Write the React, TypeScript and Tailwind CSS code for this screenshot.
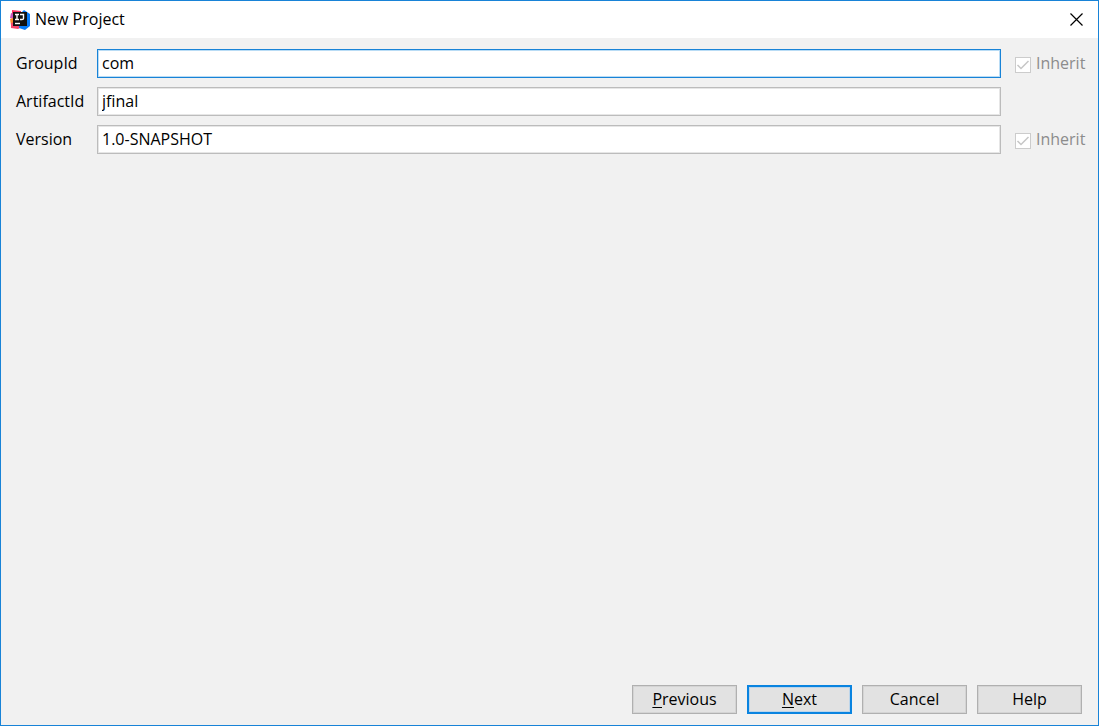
import React, { useState } from 'react';

interface FieldRowProps {
  id: string;
  label: string;
  initialValue: string;
  active?: boolean;
  inherit?: boolean;
}

function IdeaLogo() {
  return (
    <svg className="w-5 h-5 flex-shrink-0" viewBox="0 0 20 20" aria-hidden="true">
      <path d="M2 0 L11 1 L11 5 L2 7 Z" fill="#f8315f" />
      <path d="M1 3 L4 4 L4 9 L0 8 Z" fill="#c757bc" />
      <path d="M0 9 L5 7 L5 14 L1 15 Z" fill="#fc8a2c" />
      <path d="M1 13 L5 12 L12 17 L8 19 L1 18 Z" fill="#f5456b" />
      <path d="M11 3 L14 0 L20 4 L20 16 L15 20 L9 18 Z" fill="#087cfa" />
      <rect x="3" y="2" width="14" height="14" fill="#111111" />
      <path
        d="M5 4.5 H9 M7 4.5 V9.5 M5 9.5 H9 M10 4.5 H13.5 V8.5 Q13.5 9.5 12 9.5 H10"
        fill="none"
        stroke="#ffffff"
        strokeWidth="1.4"
      />
      <path d="M5 13.5 H10" stroke="#ffffff" strokeWidth="1.4" />
    </svg>
  );
}

function TitleBar() {
  return (
    <header className="flex items-center h-[37px] pl-[9px] pr-[15px] bg-white">
      <IdeaLogo />
      <h1 className="ml-[5px] pb-px flex-1">New Project</h1>
      <button type="button" aria-label="Close" className="pb-px">
        <svg className="w-[13px] h-[13px]" viewBox="0 0 13 13" aria-hidden="true">
          <path d="M0.5 0.5 L12.5 12.5 M12.5 0.5 L0.5 12.5" stroke="#000000" strokeWidth="1.2" />
        </svg>
      </button>
    </header>
  );
}

function InheritCheckbox({ id }: { id: string }) {
  return (
    <label htmlFor={id} className="grid grid-cols-[16px_auto] items-center gap-x-[5px] text-[#8c8c8c]">
      <input
        id={id}
        type="checkbox"
        checked
        disabled
        readOnly
        className="col-start-1 row-start-1 appearance-none w-4 h-4 mt-[2px] bg-white border border-[#cccccc]"
      />
      <svg
        className="col-start-1 row-start-1 w-4 h-4 mt-[2px] pointer-events-none"
        viewBox="0 0 16 16"
        aria-hidden="true"
      >
        <path d="M2.5 8 L6 11.5 L13.5 4" fill="none" stroke="#c6c6c6" strokeWidth="1.5" />
      </svg>
      <span className="pb-0.5">Inherit</span>
    </label>
  );
}

function FieldRow({ id, label, initialValue, active, inherit }: FieldRowProps) {
  const [value, setValue] = useState(initialValue);

  return (
    <div className="grid grid-cols-[81px_1fr_82px] items-center h-[29px]">
      <label htmlFor={id} className="pb-0.5">{label}</label>
      <input
        id={id}
        type="text"
        value={value}
        onChange={(e) => setValue(e.target.value)}
        className={`w-full h-[29px] px-1 pb-0.5 bg-white border outline-none ${
          active
            ? 'border-[#1883d7] shadow-[inset_0_0_0_1px_#b9dcf5]'
            : 'border-[#bcbcbc] shadow-[inset_0_0_0_1px_#e6e6e6]'
        }`}
      />
      {inherit && (
        <div className="pl-[14px]">
          <InheritCheckbox id={`${id}-inherit`} />
        </div>
      )}
    </div>
  );
}

function DialogButton({ primary, children }: { primary?: boolean; children: React.ReactNode }) {
  return (
    <button
      type="button"
      className={`w-[105px] h-[29px] pb-0.5 flex items-center justify-center bg-[#e2e2e2] ${
        primary
          ? 'border-2 border-[#0a84e0] shadow-[inset_0_0_0_1px_#bcd5ea]'
          : 'border border-[#b0b0b0] shadow-[inset_0_0_0_1px_#d4d4d4]'
      }`}
    >
      <span>{children}</span>
    </button>
  );
}

export default function App() {
  return (
    <div className="flex flex-col min-h-screen border border-[#1883d7] bg-[#f1f1f1] text-black text-base leading-5 font-['Open_Sans','Noto_Sans',sans-serif]">
      <TitleBar />
      <main className="flex-1 flex flex-col gap-[9px] pt-[11px] px-[15px]">
        <FieldRow id="group-id" label="GroupId" initialValue="com" active inherit />
        <FieldRow id="artifact-id" label="ArtifactId" initialValue="jfinal" />
        <FieldRow id="version" label="Version" initialValue="1.0-SNAPSHOT" inherit />
      </main>
      <footer className="flex justify-end gap-[10px] px-4 pb-[11px]">
        <DialogButton>
          <u className="underline-offset-2">P</u>revious
        </DialogButton>
        <DialogButton primary>
          <u className="underline-offset-2">N</u>ext
        </DialogButton>
        <DialogButton>Cancel</DialogButton>
        <DialogButton>Help</DialogButton>
      </footer>
    </div>
  );
}
